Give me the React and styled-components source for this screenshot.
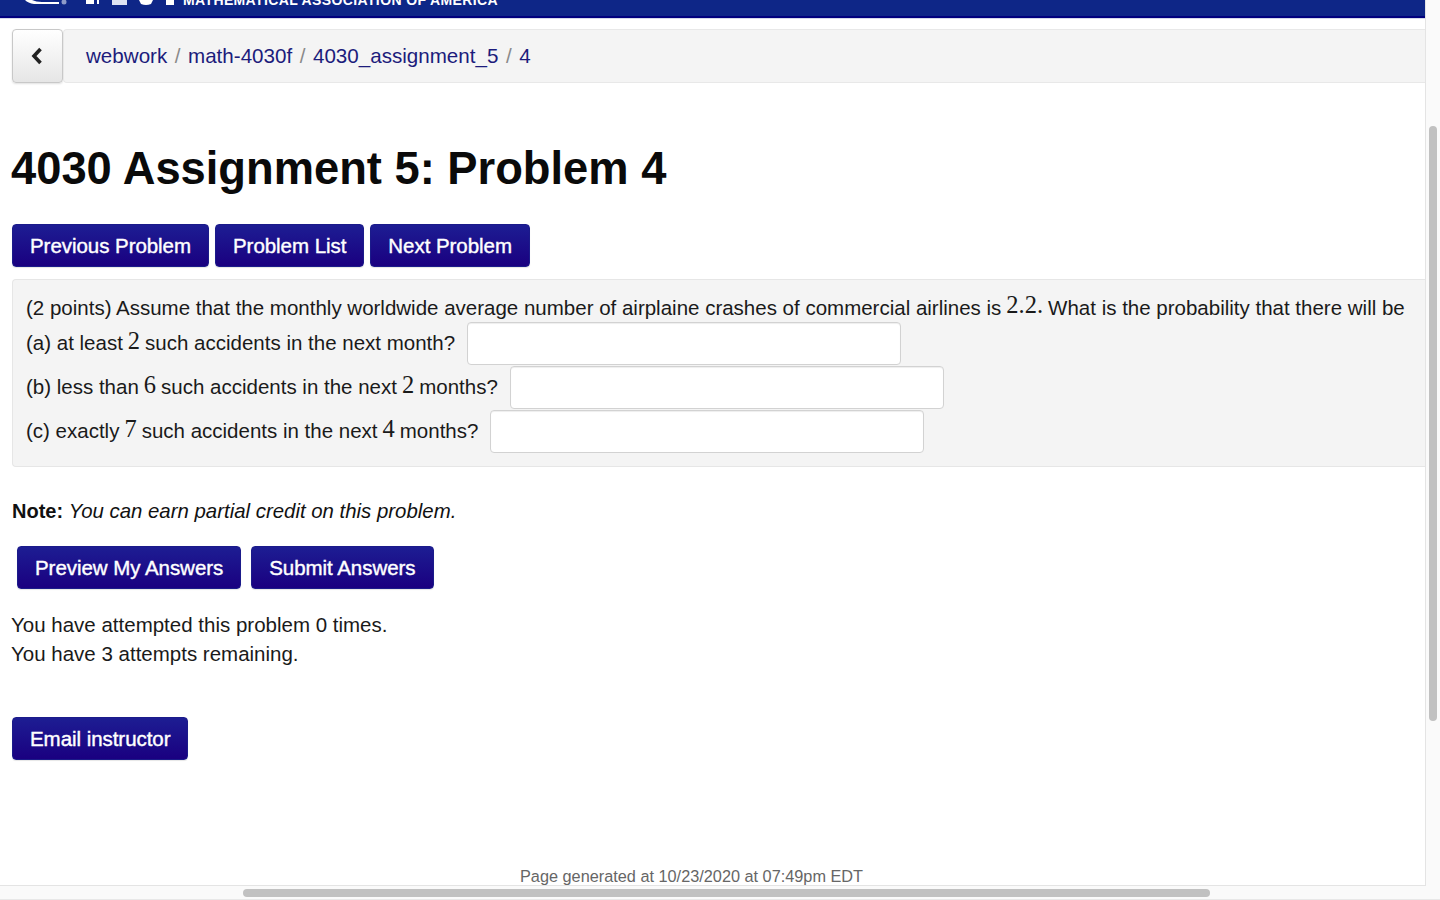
import React from "react";
import styled, { createGlobalStyle } from "styled-components";

const Global = createGlobalStyle`
  html, body { margin: 0; padding: 0; height: 100%; overflow: hidden; background: #fff; }
  body { font-family: "Liberation Sans", Arial, sans-serif; color: #111; -webkit-font-smoothing: antialiased; }
  * { box-sizing: border-box; }
`;

const Frame = styled.div`
  width: 1440px; height: 900px;
  display: grid;
  grid-template-columns: 1426px 14px;
  grid-template-rows: 886px 14px;
  overflow: hidden;
`;
const Viewport = styled.main`
  overflow: hidden;
  border-right: 1px solid #e4e4e4;
  border-bottom: 1px solid #e4e4e4;
  background: #fff;
  min-width: 0;
`;
const VTrack = styled.div`
  background: #fafafa;
  padding: 126px 0 0 3px;
`;
const VThumb = styled.div`
  width: 8px; height: 595px; border-radius: 4px; background: #c1c1c1;
`;
const HTrack = styled.div`
  background: #fafafa;
  padding: 3px 0 0 243px;
  border-bottom: 1px solid #e8e8e8;
`;
const HThumb = styled.div`
  width: 967px; height: 8px; border-radius: 4px; background: #c1c1c1;
`;
const Corner = styled.div`
  background: #fafafa;
  border-bottom: 1px solid #e8e8e8;
`;
const Banner = styled.header`
  height: 18px;
  background: #0e2687;
  border-bottom: 2px solid #00007d;
  box-shadow: 0 1px 0 #d5d9ea;
  overflow: hidden;
  display: flex;
  align-items: flex-end;
  padding: 0 0 11px 24px;
  gap: 9px;
`;
const BannerLogo = styled.svg`
  flex: none; width: 150px; height: 10px; margin-bottom: -5px;
`;
const BannerTitle = styled.span`
  font-size: 14px; line-height: 10px; font-weight: 700; color: #fff; letter-spacing: 0.37px;
  white-space: nowrap;
`;
const Content = styled.div`
  padding: 11px 0 0 12px;
`;
const NavRow = styled.nav`
  display: flex;
  align-items: stretch;
  height: 54px;
`;
const BackButton = styled.button`
  width: 51px; height: 54px; padding: 0 2px 0 0;
  display: flex; align-items: center; justify-content: center;
  border: 1px solid #c8c8c8;
  border-radius: 4px;
  background: linear-gradient(#ffffff, #e6e6e6);
  box-shadow: 0 1px 2px rgba(0,0,0,.12);
`;
const Crumbs = styled.ol`
  flex: 1; margin: 0; list-style: none;
  display: flex; align-items: center;
  padding: 0 0 0 22px;
  background: #f4f4f4;
  border: 1px solid #e8e8e8;
  border-right: 0;
  border-radius: 4px 0 0 4px;
  font-size: 20.6px;
  color: #1c1c7c;
`;
const Crumb = styled.li`
  white-space: nowrap;
  & + &::before { content: "/"; color: #8a8a8a; padding: 0 7.5px; }
`;
const Heading = styled.h1`
  margin: 59px 0 0 -1px;
  font-size: 45.3px; line-height: 54px; font-weight: 700; color: #0a0a0a;
`;
const ButtonRow = styled.div`
  display: flex; gap: ${p => p.$gap || 6}px;
  margin: ${p => p.$top || 0}px 0 0 ${p => p.$left || 0}px;
`;
const NavyButton = styled.button`
  height: 43px; padding: 1px 17px 0;
  border: 1px solid #1b1b8a;
  border-radius: 4px;
  background: linear-gradient(#1d1d93, #1a0080);
  color: #fff;
  font-family: inherit; font-size: 20.5px; font-weight: 400;
  -webkit-text-stroke: 0.4px #fff;
  letter-spacing: -0.05px;
  white-space: nowrap;
  box-shadow: 0 1px 1px rgba(0,0,0,.1);
`;
const ProblemBox = styled.section`
  margin-top: 12px;
  height: 188px;
  padding: 11px 0 0 13px;
  background: #f4f4f4;
  border: 1px solid #e6e6e6;
  border-right: 0;
  border-radius: 4px 0 0 4px;
  font-size: 20.5px;
  color: #1a1a1a;
  white-space: nowrap;
`;
const Intro = styled.div`
  line-height: 32px;
  height: 30px;
`;
const Part = styled.div`
  display: flex; align-items: center; height: 44px;
`;
const Num = styled.span`
  font-family: "Liberation Serif", "Times New Roman", serif;
  font-size: 24.5px;
  position: relative; top: -2px;
  margin: 0 5px;
`;
const Answer = styled.input`
  width: 434px; height: 43px; margin-left: 12px;
  background: #fff;
  border: 1px solid #d2d2d2;
  border-radius: 4px;
  box-shadow: inset 0 1px 1px rgba(0,0,0,.07);
`;
const Note = styled.p`
  margin: 32px 0 0 0;
  font-size: 20px; line-height: 24px; color: #111;
  strong { font-weight: 700; }
  em { font-style: italic; font-size: 20.4px; }
`;
const Attempts = styled.p`
  margin: 21px 0 0 -1px;
  font-size: 20.5px; line-height: 29px; color: #1a1a1a;
`;
const Footer = styled.footer`
  margin: 106px 0 0 0;
  padding-left: 508px;
  font-size: 16.3px; line-height: 20px; color: #666;
  white-space: nowrap;
`;

function Chevron() {
  return (
    <svg width="14" height="20" viewBox="0 0 14 20" aria-hidden="true">
      <path d="M10.5 3 L4 10 L10.5 17" fill="none" stroke="#222" strokeWidth="3.6" />
    </svg>
  );
}

function MaaLogo() {
  return (
    <BannerLogo viewBox="0 0 150 10" aria-hidden="true">
      <path d="M1 0 H8 Q12 2 18 2 H35 V4 H10 Q4 3 1 0Z" fill="#fff" />
      <circle cx="40" cy="2" r="2.5" fill="#8d9ac8" />
      <path d="M62 0 H70 V4 H62Z M73 0 H75 V4 H73Z" fill="#fff" />
      <path d="M88 0 H103 V5 H88Z" fill="#dfe3f2" />
      <path d="M115 0 H129 L127 4 Q122 6 117 4Z" fill="#fff" />
      <path d="M142 0 H151 V5 H142Z" fill="#fff" />
    </BannerLogo>
  );
}

export default function App() {
  return (
    <>
      <Global />
      <Frame>
        <Viewport>
          <Banner>
            <MaaLogo />
            <BannerTitle>MATHEMATICAL ASSOCIATION OF AMERICA</BannerTitle>
          </Banner>
          <Content>
            <NavRow>
              <BackButton aria-label="Back"><Chevron /></BackButton>
              <Crumbs>
                <Crumb>webwork</Crumb>
                <Crumb>math-4030f</Crumb>
                <Crumb>4030_assignment_5</Crumb>
                <Crumb>4</Crumb>
              </Crumbs>
            </NavRow>
            <Heading>4030 Assignment 5: Problem 4</Heading>
            <ButtonRow $top={28}>
              <NavyButton>Previous Problem</NavyButton>
              <NavyButton>Problem List</NavyButton>
              <NavyButton>Next Problem</NavyButton>
            </ButtonRow>
            <ProblemBox>
              <Intro>(2 points) Assume that the monthly worldwide average number of airplaine crashes of commercial airlines is<Num>2.2.</Num>What is the probability that there will be</Intro>
              <Part>(a) at least<Num>2</Num>such accidents in the next month?<Answer /></Part>
              <Part>(b) less than<Num>6</Num>such accidents in the next<Num>2</Num>months?<Answer /></Part>
              <Part>(c) exactly<Num>7</Num>such accidents in the next<Num>4</Num>months?<Answer /></Part>
            </ProblemBox>
            <Note><strong>Note:</strong> <em>You can earn partial credit on this problem.</em></Note>
            <ButtonRow $top={23} $left={5} $gap={10}>
              <NavyButton>Preview My Answers</NavyButton>
              <NavyButton>Submit Answers</NavyButton>
            </ButtonRow>
            <Attempts>You have attempted this problem 0 times.<br />You have 3 attempts remaining.</Attempts>
            <ButtonRow $top={49}>
              <NavyButton>Email instructor</NavyButton>
            </ButtonRow>
            <Footer>Page generated at 10/23/2020 at 07:49pm EDT</Footer>
          </Content>
        </Viewport>
        <VTrack><VThumb /></VTrack>
        <HTrack><HThumb /></HTrack>
        <Corner />
      </Frame>
    </>
  );
}
